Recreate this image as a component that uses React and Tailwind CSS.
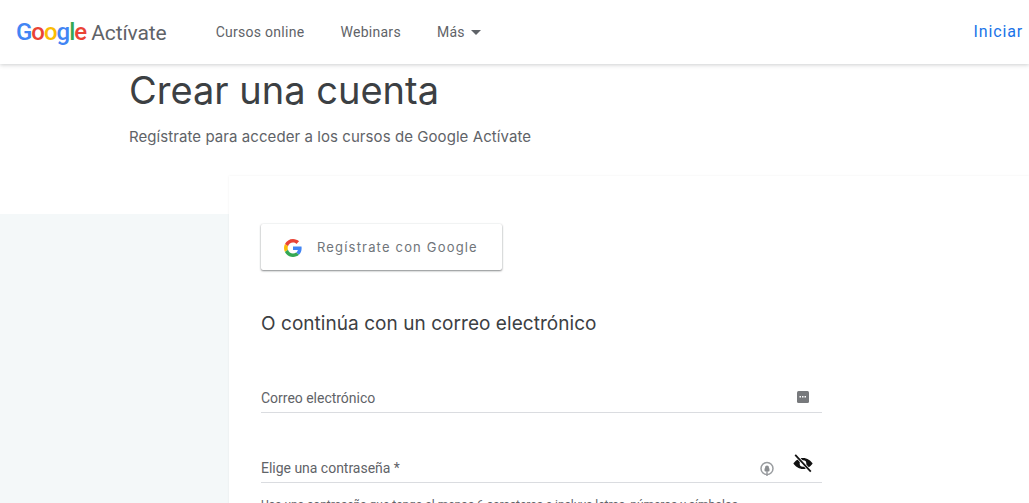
import React from "react";

const GoogleG = () => (
  <svg width="18" height="18" viewBox="0 0 48 48">
    <path fill="#EA4335" d="M24 9.5c3.54 0 6.71 1.22 9.21 3.6l6.85-6.85C35.9 2.38 30.47 0 24 0 14.62 0 6.51 5.38 2.56 13.22l7.98 6.19C12.43 13.72 17.74 9.5 24 9.5z" />
    <path fill="#4285F4" d="M46.98 24.55c0-1.57-.15-3.09-.38-4.55H24v9.02h12.94c-.58 2.96-2.26 5.48-4.78 7.18l7.73 6c4.51-4.18 7.09-10.36 7.09-17.65z" />
    <path fill="#FBBC05" d="M10.53 28.59c-.48-1.45-.76-2.99-.76-4.59s.27-3.14.76-4.59l-7.98-6.19C.92 16.46 0 20.12 0 24c0 3.88.92 7.54 2.56 10.78l7.97-6.19z" />
    <path fill="#34A853" d="M24 48c6.48 0 11.93-2.13 15.89-5.81l-7.73-6c-2.15 1.45-4.92 2.3-8.16 2.3-6.26 0-11.57-4.22-13.47-9.91l-7.98 6.19C6.51 42.62 14.62 48 24 48z" />
  </svg>
);

const Logo = () => (
  <div className="flex items-baseline leading-none">
    <span className="font-['Roboto',sans-serif] text-[24px] font-medium tracking-[-1px]">
      <span className="text-[#4285f4]">G</span>
      <span className="text-[#ea4335]">o</span>
      <span className="text-[#fbbc05]">o</span>
      <span className="text-[#4285f4]">g</span>
      <span className="text-[#34a853]">l</span>
      <span className="text-[#ea4335]">e</span>
    </span>
    <span className="ml-[5px] font-['Roboto',sans-serif] text-[21px] tracking-[-0.1px] text-[#5f6368]">Actívate</span>
  </div>
);

const KeyIcon = () => (
  <svg width="12" height="12" viewBox="0 0 12 12">
    <rect x="0" y="0" width="12" height="12" rx="1.5" fill="#77797c" />
    <rect x="2.5" y="5" width="1.5" height="1.5" fill="#fff" />
    <rect x="5" y="5" width="1.5" height="1.5" fill="#fff" />
    <rect x="7.5" y="5" width="1.5" height="1.5" fill="#fff" />
  </svg>
);

const PassIcon = () => (
  <svg width="14" height="16" viewBox="0 0 14 16" fill="none">
    <circle cx="7" cy="7.5" r="6" stroke="#9a9da0" strokeWidth="1.5" />
    <circle cx="7" cy="6.5" r="2" fill="#8a8d90" />
    <rect x="4.5" y="7" width="5" height="3.5" rx="1" fill="#8a8d90" />
    <path d="M7 10v5" stroke="#9a9da0" strokeWidth="1.5" />
  </svg>
);

const EyeOff = () => (
  <svg width="22" height="22" viewBox="0 0 24 24">
    <path fill="#111" d="M12 6.5c-4.6 0-8.5 2.9-10.5 6 2 3.1 5.9 6 10.5 6s8.5-2.9 10.5-6c-2-3.1-5.9-6-10.5-6z" />
    <circle cx="12" cy="12.5" r="3.6" fill="#fff" />
    <path d="M4 3.5 L20 21" stroke="#fff" strokeWidth="3.6" />
    <path d="M3.5 3.2 L20.5 21.4" stroke="#111" strokeWidth="1.9" />
  </svg>
);

const Field = ({ label, children, mt }) => (
  <div className={`${mt} flex h-[30px] w-[561px] items-center justify-between border-b border-[#dadce0] font-['Roboto',sans-serif] text-[14px] tracking-[-0.02px] text-[#5f6368]`}>
    <span className="pt-[2px]">{label}</span>
    {children}
  </div>
);

export default function App() {
  return (
    <div className="h-[503px] w-[1029px] overflow-hidden bg-white font-['Roboto',sans-serif]">
      <header className="relative z-10 flex h-[64px] items-center bg-white pl-4 pr-[6px] shadow-[0_1px_4px_rgba(60,64,67,0.25)]">
        <Logo />
        <nav className="ml-[49px] flex items-center gap-[36px] text-[14px] tracking-[0.28px] text-[#5f6368]">
          <span>Cursos online</span>
          <span>Webinars</span>
          <span className="flex items-center gap-[6px]">
            Más
            <span className="mt-[1px] h-0 w-0 border-x-[5px] border-t-[5px] border-x-transparent border-t-[#5f6368]" />
          </span>
        </nav>
        <span className="ml-auto text-[16px] tracking-[0.85px] text-[#1a73e8]">Iniciar</span>
      </header>

      <section className="pl-[129px] text-[#3c4043]">
        <h1 className="pt-[1px] font-['Inter',sans-serif] text-[38px] leading-[50px] tracking-[0px]">Crear una cuenta</h1>
        <p className="mt-[10px] font-['Inter',sans-serif] text-[15px] leading-[24px] tracking-[0.07px] text-[#5f6368]">Regístrate para acceder a los cursos de Google Actívate</p>
      </section>

      <div className="mt-[27px] grid grid-cols-[229px_1fr]">
        <div className="mt-[38px] bg-[#f4f8f9]" />
        <main className="h-[400px] bg-white pl-[32px] pt-[48px] shadow-[0_0_2px_rgba(60,64,67,0.08)]">
          <button className="flex h-[46px] w-[241px] items-center rounded-[2px] bg-white pl-[23px] pt-[1px] font-['Inter',sans-serif] text-[13px] tracking-[1.18px] text-[#70757a] shadow-[0_1px_2px_rgba(60,64,67,0.6),0_0_2px_rgba(60,64,67,0.12)]">
            <GoogleG />
            <span className="ml-[15px]">Regístrate con Google</span>
          </button>
          <h2 className="mt-[40px] font-['Inter',sans-serif] text-[19px] leading-[28px] tracking-[0.05px] text-[#3c4043]">O continúa con un correo electrónico</h2>
          <Field label="Correo electrónico" mt="mt-[45px]">
            <span className="mb-[2px] mr-[13px]"><KeyIcon /></span>
          </Field>
          <Field label="Elige una contraseña *" mt="mt-[40px]">
            <span className="flex items-center gap-[18px] pr-[8px]">
              <span className="mt-[3px]"><PassIcon /></span>
              <span className="mb-[10px]"><EyeOff /></span>
            </span>
          </Field>
          <p className="mt-[13px] text-[12px] tracking-[-0.02px] text-[#5f6368]">Usa una contraseña que tenga al menos 6 caracteres e incluya letras, números y símbolos</p>
        </main>
      </div>
    </div>
  );
}
